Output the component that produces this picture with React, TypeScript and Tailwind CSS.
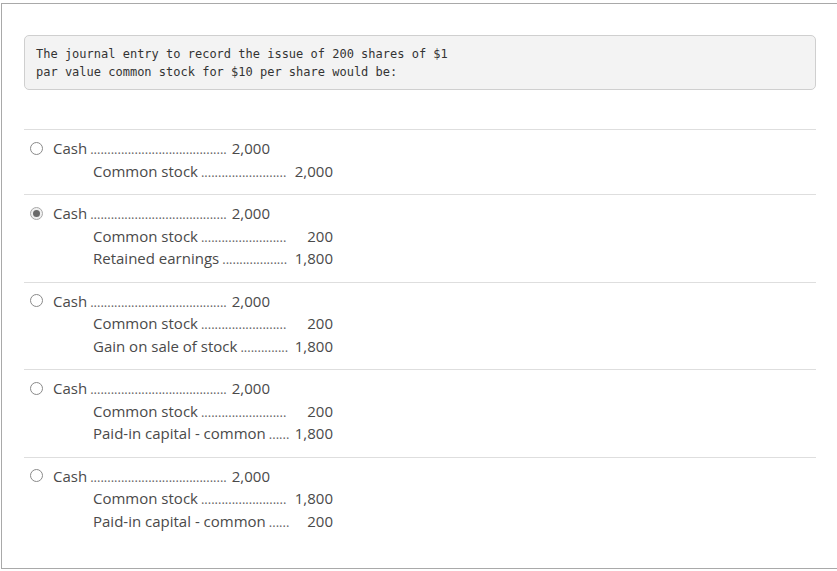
type Line = { label: string; amount: string; dots: number };
type Choice = { id: number; credits: Line[] };

const choices: Choice[] = [
  { id: 1, credits: [{ label: "Common stock", amount: "2,000", dots: 25 }] },
  {
    id: 2,
    credits: [
      { label: "Common stock", amount: "200", dots: 25 },
      { label: "Retained earnings", amount: "1,800", dots: 19 },
    ],
  },
  {
    id: 3,
    credits: [
      { label: "Common stock", amount: "200", dots: 25 },
      { label: "Gain on sale of stock", amount: "1,800", dots: 14 },
    ],
  },
  {
    id: 4,
    credits: [
      { label: "Common stock", amount: "200", dots: 25 },
      { label: "Paid-in capital - common", amount: "1,800", dots: 6 },
    ],
  },
  {
    id: 5,
    credits: [
      { label: "Common stock", amount: "1,800", dots: 25 },
      { label: "Paid-in capital - common", amount: "200", dots: 6 },
    ],
  },
];

function Radio({ checked }: { checked: boolean }) {
  return (
    <span
      className={`flex h-[13px] w-[13px] shrink-0 items-center justify-center rounded-full border ${
        checked ? "border-[#a8a8a8] bg-[#f0f0f0]" : "border-[#8a8a8a] bg-white"
      }`}
    >
      {checked ? <span className="h-[7px] w-[7px] rounded-full bg-[#6b6b6b]" /> : null}
    </span>
  );
}

function Leader({ label, amount, dots, width }: { label: string; amount: string; dots: number; width: string }) {
  return (
    <div className={`flex h-[22.5px] items-baseline justify-between whitespace-nowrap ${width}`}>
      <span>
        {label}
        <span className="pl-[3px] text-[13px] leading-none text-[#666]">{".".repeat(dots)}</span>
      </span>
      <span>{amount}</span>
    </div>
  );
}

export default function App() {
  const selected = 2;

  return (
    <div className="h-[571px] w-full overflow-hidden bg-white pt-[3px]">
      <div className="ml-px h-[566px] border-b border-l border-t border-[#a9a9a9] pl-[22px] pr-[21px] pt-[31px]">
        <div className="rounded-[5px] border border-[#cfcfcf] bg-[#f3f3f3] pb-[8px] pl-[11px] pt-[9px] font-['DejaVu_Sans_Mono',monospace] text-[12px] leading-[18px] text-[#333]">
          <p>The journal entry to record the issue of 200 shares of $1</p>
          <p>par value common stock for $10 per share would be:</p>
        </div>

        <div className="mt-[39px] font-['Open_Sans',sans-serif] text-[15px] leading-[22.5px] text-[#4a4a4a]">
          {choices.map((choice) => (
            <div key={choice.id} className="border-t border-[#dedede] pb-3 pl-[6px] pt-[7px]">
              <div className="flex items-center gap-[10px]">
                <Radio checked={choice.id === selected} />
                <Leader label="Cash" amount="2,000" dots={40} width="w-[217px]" />
              </div>
              <div className="pl-[63px]">
                {choice.credits.map((line) => (
                  <Leader key={line.label} label={line.label} amount={line.amount} dots={line.dots} width="w-[240px]" />
                ))}
              </div>
            </div>
          ))}
        </div>
      </div>
    </div>
  );
}
